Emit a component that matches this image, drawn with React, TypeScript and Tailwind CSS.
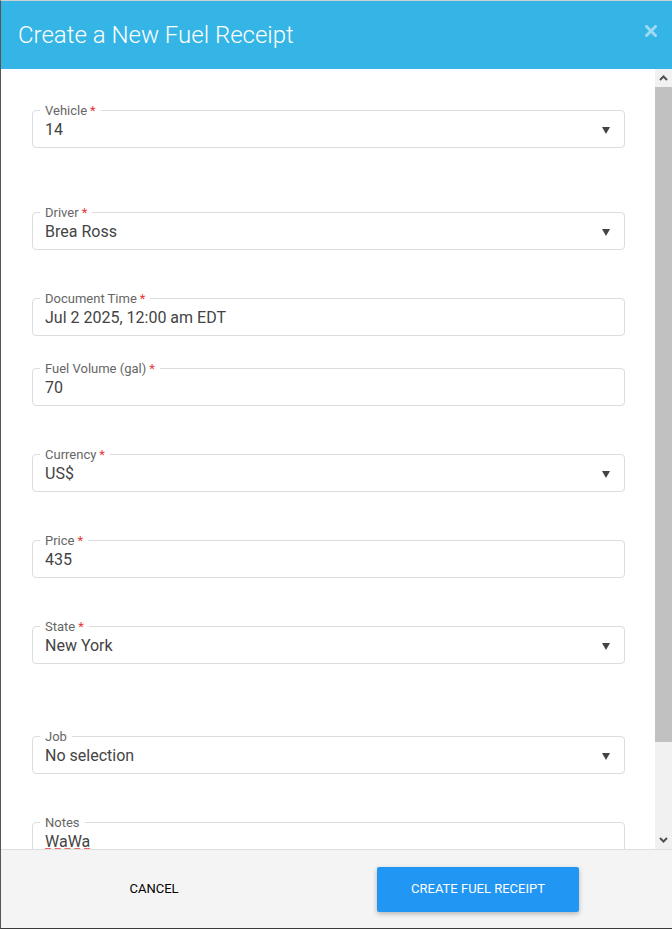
import React from "react";

type Field = {
  label: string;
  value: string;
  required?: boolean;
  select?: boolean;
  spell?: boolean;
  mt: string;
};

const fields: Field[] = [
  { label: "Vehicle", value: "14", required: true, select: true, mt: "mt-[41px]" },
  { label: "Driver", value: "Brea Ross", required: true, select: true, mt: "mt-[64px]" },
  { label: "Document Time", value: "Jul 2 2025, 12:00 am EDT", required: true, mt: "mt-[48px]" },
  { label: "Fuel Volume (gal)", value: "70", required: true, mt: "mt-[32px]" },
  { label: "Currency", value: "US$", required: true, select: true, mt: "mt-[48px]" },
  { label: "Price", value: "435", required: true, mt: "mt-[48px]" },
  { label: "State", value: "New York", required: true, select: true, mt: "mt-[48px]" },
  { label: "Job", value: "No selection", select: true, mt: "mt-[72px]" },
  { label: "Notes", value: "WaWa", spell: true, mt: "mt-[48px]" },
];

const OutlinedField = ({ f }: { f: Field }) => (
  <div
    className={`${f.mt} relative h-[38px] border border-[#dcdcdc] rounded-[4px] flex items-center pl-[12px] pr-[14px]`}
  >
    {/* notched label sitting on the border */}
    <span className="absolute -top-[8px] left-[7px] bg-white px-[5px] text-[13px] leading-[16px] text-[#666]">
      {f.label}
      {f.required && <span className="text-[#e53935] ml-[3px]">*</span>}
    </span>
    <span className="flex-1 text-[16px] leading-[20px] text-[#444] pt-[1px]">
      <span
        className={
          f.spell ? "underline decoration-dashed decoration-[#e53935] underline-offset-[2px]" : ""
        }
      >
        {f.value}
      </span>
    </span>
    {f.select && (
      <svg width="8" height="7" viewBox="0 0 8 7" className="mt-[2px]">
        <path d="M0 0H8L4 7Z" fill="#444" />
      </svg>
    )}
  </div>
);

const ScrollBar = () => (
  <div className="w-[17px] flex flex-col bg-[#f1f1f1]">
    <div className="h-[18px] flex items-center justify-center">
      <svg width="9" height="6" viewBox="0 0 9 6">
        <path d="M1 5L4.5 1.5L8 5" stroke="#505050" strokeWidth="2" fill="none" />
      </svg>
    </div>
    <div className="h-[655px] bg-[#c1c1c1]" />
    <div className="flex-1" />
    <div className="h-[18px] flex items-center justify-center">
      <svg width="9" height="6" viewBox="0 0 9 6">
        <path d="M1 1L4.5 4.5L8 1" stroke="#505050" strokeWidth="2" fill="none" />
      </svg>
    </div>
  </div>
);

export default function App() {
  return (
    <div
      className="w-[672px] h-[929px] flex flex-col overflow-hidden border-t border-t-[#cfcfcf] border-l border-l-[#555] border-b border-b-[#3a3a3a]"
      style={{ fontFamily: "Roboto, 'Liberation Sans', sans-serif" }}
    >
      <div className="h-[68px] bg-[#35b5e5] flex items-center justify-between pl-[17px] pr-[15px] shrink-0">
        <h1 className="text-[24px] font-light text-white">Create a New Fuel Receipt</h1>
        <svg width="12" height="12" viewBox="0 0 12 12" className="mb-[8px]">
          <path d="M1.5 1.5L10.5 10.5M10.5 1.5L1.5 10.5" stroke="#9fdaf3" strokeWidth="3" strokeLinecap="round" />
        </svg>
      </div>

      <div className="h-[780px] flex bg-white shrink-0">
        <div className="flex-1 overflow-hidden pl-[31px] pr-[30px]">
          {fields.map((f) => (
            <OutlinedField key={f.label} f={f} />
          ))}
          <div className="h-[60px]" />
        </div>
        <ScrollBar />
      </div>

      <div className="flex-1 bg-[#f4f4f4] border-t border-t-[#dedede] flex items-center pl-[52px]">
        <button className="w-[202px] h-[45px] text-[13px] text-black uppercase">Cancel</button>
        <button className="ml-[122px] w-[202px] h-[45px] rounded-[2px] bg-[#2196f3] text-white text-[13px] uppercase shadow-[0_2px_5px_rgba(0,0,0,0.26)]">
          Create Fuel Receipt
        </button>
      </div>
    </div>
  );
}
